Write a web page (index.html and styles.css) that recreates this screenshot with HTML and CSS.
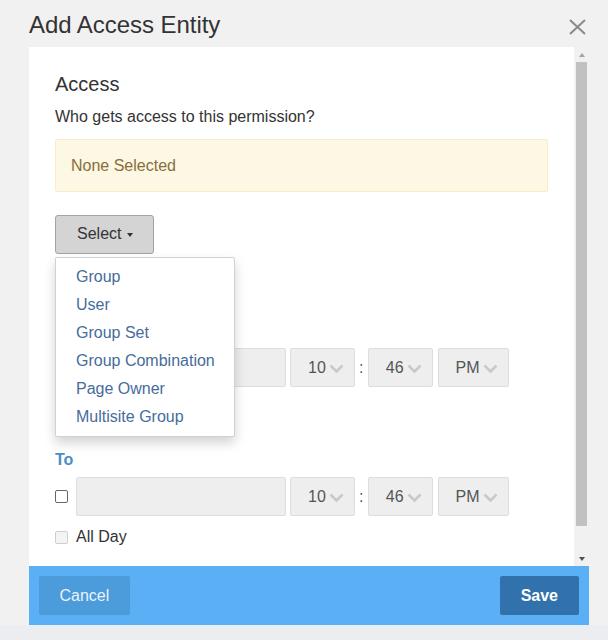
FILE: index.html
```html
<!DOCTYPE html>
<html lang="en">
<head>
<meta charset="utf-8">
<title>Add Access Entity</title>
<link rel="stylesheet" href="styles.css">
</head>
<body>
<div class="dialog">
  <div class="titlebar">
    <h1 class="title">Add Access Entity</h1>
    <button class="close" aria-label="Close">
      <svg width="17" height="16" viewBox="0 0 17 16"><path d="M1 1 L16 15 M16 1 L1 15" stroke="#8a8a8a" stroke-width="2" fill="none"/></svg>
    </button>
  </div>
  <div class="body">
    <div class="content">
      <h2 class="section">Access</h2>
      <p class="lead">Who gets access to this permission?</p>
      <div class="alert">None Selected</div>
      <div class="btn-group">
        <button class="btn-select">Select <span class="caret"></span></button>
        <ul class="menu">
          <li>Group</li>
          <li>User</li>
          <li>Group Set</li>
          <li>Group Combination</li>
          <li>Page Owner</li>
          <li>Multisite Group</li>
        </ul>
      </div>
      <div class="period from">
        <div class="period-label">From</div>
        <div class="dt-row">
          <span class="cb"></span>
          <span class="date"></span>
          <span class="sel">10<svg class="chev" width="15" height="9" viewBox="0 0 15 9"><path d="M1.5 1.5 L7.5 7.5 L13.5 1.5" stroke="#c9c9c9" stroke-width="2.6" fill="none"/></svg></span>
          <span class="colon">:</span>
          <span class="sel">46<svg class="chev" width="15" height="9" viewBox="0 0 15 9"><path d="M1.5 1.5 L7.5 7.5 L13.5 1.5" stroke="#c9c9c9" stroke-width="2.6" fill="none"/></svg></span>
          <span class="sel ampm">PM<svg class="chev" width="15" height="9" viewBox="0 0 15 9"><path d="M1.5 1.5 L7.5 7.5 L13.5 1.5" stroke="#c9c9c9" stroke-width="2.6" fill="none"/></svg></span>
        </div>
        <div class="allday"><span class="cb disabled"></span>All Day</div>
      </div>
      <div class="period to">
        <div class="period-label">To</div>
        <div class="dt-row">
          <span class="cb"></span>
          <span class="date"></span>
          <span class="sel">10<svg class="chev" width="15" height="9" viewBox="0 0 15 9"><path d="M1.5 1.5 L7.5 7.5 L13.5 1.5" stroke="#c9c9c9" stroke-width="2.6" fill="none"/></svg></span>
          <span class="colon">:</span>
          <span class="sel">46<svg class="chev" width="15" height="9" viewBox="0 0 15 9"><path d="M1.5 1.5 L7.5 7.5 L13.5 1.5" stroke="#c9c9c9" stroke-width="2.6" fill="none"/></svg></span>
          <span class="sel ampm">PM<svg class="chev" width="15" height="9" viewBox="0 0 15 9"><path d="M1.5 1.5 L7.5 7.5 L13.5 1.5" stroke="#c9c9c9" stroke-width="2.6" fill="none"/></svg></span>
        </div>
        <div class="allday"><span class="cb disabled"></span>All Day</div>
      </div>
    </div>
    <div class="scrollbar">
      <span class="sb-btn"><span class="arrow-up"></span></span>
      <span class="thumb"></span>
      <span class="sb-space"></span>
      <span class="sb-btn"><span class="arrow-down"></span></span>
    </div>
  </div>
  <div class="footer">
    <button class="btn cancel">Cancel</button>
    <button class="btn save">Save</button>
  </div>
</div>
</body>
</html>
```

FILE: styles.css
```css
* { box-sizing: border-box; }

html, body {
  margin: 0;
  padding: 0;
}

body {
  background: linear-gradient(to bottom, #f1f1f1 0, #f1f1f1 625px, #ebedf0 625px);
  min-height: 640px;
  font-family: "Liberation Sans", Arial, sans-serif;
  font-size: 16px;
  color: #333;
}

.dialog {
  margin-left: 29px;
  width: 560px;
}

.titlebar {
  height: 47px;
  display: flex;
  justify-content: space-between;
  align-items: flex-start;
}

.title {
  margin: 0;
  padding-top: 11px;
  font-size: 24px;
  line-height: 28px;
  font-weight: normal;
  letter-spacing: -0.05px;
  color: #333;
}

.close {
  margin: 19px 3px 0 0;
  padding: 0;
  border: 0;
  background: none;
  display: block;
  line-height: 0;
}

.body {
  display: flex;
  height: 519px;
}

.content {
  flex: 1;
  background: #fff;
  padding: 26px 26px 0;
  overflow: hidden;
}

.section {
  margin: 0;
  font-size: 20px;
  line-height: 22px;
  font-weight: normal;
  color: #333;
}

.lead {
  margin: 11px 0 0;
  line-height: 22px;
}

.alert {
  margin-top: 11px;
  padding: 15px 15px 14px;
  line-height: 22px;
  background: #fcf8e3;
  border: 1px solid #faebcc;
  border-radius: 2px;
  color: #8a6d3b;
}

.btn-group {
  position: relative;
  margin-top: 23px;
  height: 39px;
}

.btn-select {
  height: 39px;
  padding: 7px 20px 8px 21px;
  font-family: inherit;
  font-size: 16px;
  line-height: 22px;
  color: #333;
  background: #d4d4d4;
  border: 1px solid #a3a3a3;
  border-radius: 3px;
}

.caret {
  display: inline-block;
  width: 0;
  height: 0;
  margin-left: 1px;
  vertical-align: middle;
  border-top: 4px solid #333;
  border-left: 3.5px solid transparent;
  border-right: 3.5px solid transparent;
}

.menu {
  position: absolute;
  top: 42px;
  left: 0;
  z-index: 5;
  width: 180px;
  margin: 0;
  padding: 5px 0;
  list-style: none;
  background: #fff;
  border: 1px solid rgba(0, 0, 0, 0.18);
  border-radius: 2px;
  box-shadow: 0 6px 12px rgba(0, 0, 0, 0.175);
}

.menu li {
  padding: 0 20px;
  line-height: 28px;
  color: #466c9c;
  white-space: nowrap;
}

.period.from { margin-top: 66px; }
.period.to { margin-top: 30px; }

.period-label {
  line-height: 22px;
  font-weight: bold;
  color: #4a8dc8;
  margin-bottom: 6px;
}

.dt-row {
  display: flex;
  align-items: center;
  height: 39px;
}

.cb {
  display: inline-block;
  width: 13px;
  height: 13px;
  margin-right: 8px;
  background: #fff;
  border: 1px solid #666;
  border-radius: 2px;
}

.cb.disabled {
  background: #f4f4f4;
  border-color: #cfcfcf;
}

.date {
  width: 210px;
  height: 39px;
  margin-right: 4px;
  background: #eee;
  border: 1px solid #ddd;
  border-radius: 2px;
}

.sel {
  display: inline-flex;
  align-items: center;
  gap: 3px;
  height: 39px;
  padding: 0 10px 0 17px;
  background: #eee;
  border: 1px solid #ddd;
  border-radius: 2px;
  color: #555;
  line-height: 22px;
}

.chev { display: block; margin-top: 1px; }

.colon {
  width: 13px;
  text-align: center;
  color: #555;
}

.ampm { margin-left: 5px; }

.allday {
  display: flex;
  align-items: center;
  margin-top: 10px;
  line-height: 22px;
  color: #333;
}

.scrollbar {
  width: 15px;
  display: flex;
  flex-direction: column;
  background: #f1f1f1;
}

.sb-btn {
  height: 15px;
  display: flex;
  align-items: center;
  justify-content: center;
  flex: none;
}

.arrow-up {
  width: 0;
  height: 0;
  border-left: 3.5px solid transparent;
  border-right: 3.5px solid transparent;
  border-bottom: 4px solid #a3a3a3;
}

.arrow-down {
  width: 0;
  height: 0;
  border-left: 3.5px solid transparent;
  border-right: 3.5px solid transparent;
  border-top: 4px solid #505050;
}

.thumb {
  height: 464px;
  width: 11px;
  margin-left: 2px;
  background: #c1c1c1;
  flex: none;
}

.sb-space { flex: 1; }

.footer {
  display: flex;
  justify-content: space-between;
  padding: 10px;
  background: #5aaff5;
}

.btn {
  height: 39px;
  border: 0;
  border-radius: 2px;
  font-family: inherit;
  font-size: 16px;
  line-height: 22px;
}

.cancel {
  padding: 0 20.5px;
  background: #4c9bdb;
  color: #eaf3fb;
}

.save {
  padding: 0 21px;
  background: #3171ac;
  color: #fff;
  font-weight: bold;
}
```
